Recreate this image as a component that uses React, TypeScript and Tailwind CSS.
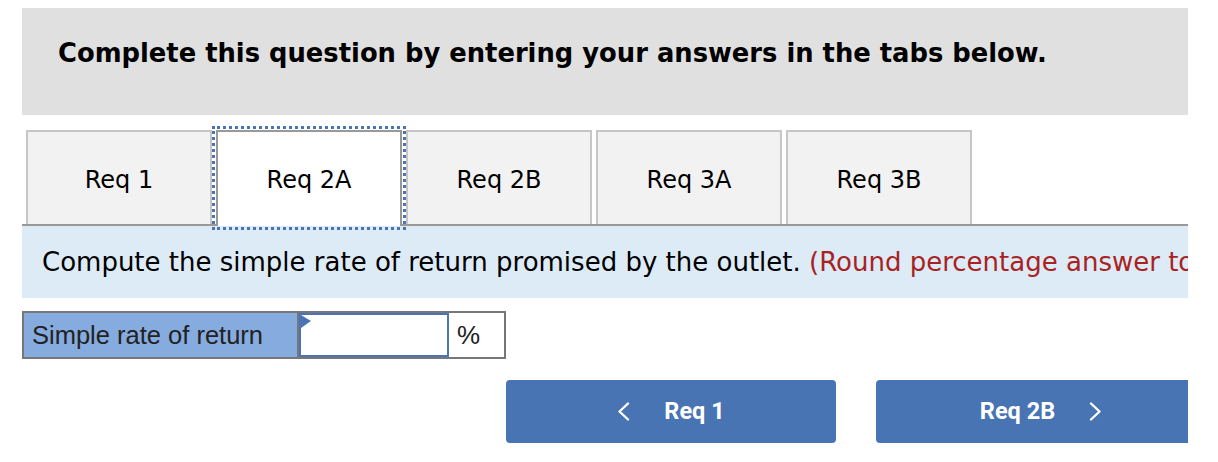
import { useState } from 'react'

const tabs = ['Req 1', 'Req 2A', 'Req 2B', 'Req 3A', 'Req 3B']

function Chevron({ dir }: { dir: 'left' | 'right' }) {
  return (
    <svg width="13" height="19" viewBox="0 0 13 19" fill="none">
      {dir === 'left' ? (
        <polyline points="11,1.5 2.5,9.5 11,17.5" stroke="white" strokeWidth="2.4" strokeLinecap="round" strokeLinejoin="round" />
      ) : (
        <polyline points="2,1.5 10.5,9.5 2,17.5" stroke="white" strokeWidth="2.4" strokeLinecap="round" strokeLinejoin="round" />
      )}
    </svg>
  )
}

export default function App() {
  const [active, setActive] = useState(1)
  const [value, setValue] = useState('')

  return (
    <div className="w-[1218px] h-[462px] bg-white pt-[8px] pl-[22px]">
      <div className="w-[1166px] overflow-hidden">
        {/* instructions header */}
        <div className="h-[107px] bg-[#e0e0e0] pl-[36px] pt-[29px]">
          <p className="font-['DejaVu_Sans',sans-serif] font-bold text-[25.8px] leading-[32px] text-black whitespace-nowrap">
            Complete this question by entering your answers in the tabs below.
          </p>
        </div>

        {/* tabs */}
        <div className="mt-[15px] flex items-end gap-[4px] pl-[4px] border-b-2 border-[#999]">
          {tabs.map((t, i) =>
            i === active ? (
              <button
                key={t}
                onClick={() => setActive(i)}
                className="w-[186px] h-[96px] -mb-[2px] bg-white border-2 border-b-0 border-[#999] outline-[3px] outline-dotted outline-[#4a74b5] outline-offset-[1px] font-['DejaVu_Sans',sans-serif] text-[24px] text-black pt-[2px]"
              >
                {t}
              </button>
            ) : (
              <button
                key={t}
                onClick={() => setActive(i)}
                className="w-[186px] h-[94px] bg-[#f2f2f2] border-2 border-b-0 border-[#c6c6c6] font-['DejaVu_Sans',sans-serif] text-[24px] text-black pt-[4px]"
              >
                {t}
              </button>
            )
          )}
        </div>

        {/* question */}
        <div className="h-[72px] bg-[#ddebf7] pl-[20px] flex items-center">
          <p className="font-['DejaVu_Sans',sans-serif] text-[26px] text-black whitespace-nowrap">
            Compute the simple rate of return promised by the outlet.{' '}
            <span className="text-[#a8231f]">(Round percentage answer to 1 decimal place.)</span>
          </p>
        </div>

        {/* answer row */}
        <div className="mt-[13px] flex w-[484px] h-[48px] border-2 border-[#777]">
          <div className="w-[275px] bg-[#85abdf] border-r-2 border-[#777] flex items-center pl-[8px] font-['Liberation_Sans',Arial,sans-serif] text-[25.5px] text-[#222]">
            Simple rate of return
          </div>
          <div className="relative w-[150px] border-2 border-[#4a74b5] bg-white">
            <input
              value={value}
              onChange={e => setValue(e.target.value)}
              className="w-full h-full outline-none px-2 font-['Liberation_Sans',Arial,sans-serif] text-[22px] text-right"
            />
            <svg className="absolute left-0 top-0" width="11" height="14" viewBox="0 0 11 14">
              <polygon points="0,0 10,6 0,13" fill="#4a74b5" />
            </svg>
          </div>
          <div className="flex-1 bg-white flex items-center pl-[8px] font-['Liberation_Sans',Arial,sans-serif] text-[26px] text-[#222]">
            %
          </div>
        </div>

        {/* navigation */}
        <div className="mt-[21px] ml-[484px] flex gap-[40px] w-[700px]">
          <button className="w-[330px] h-[63px] shrink-0 rounded-[4px] bg-[#4874b3] flex items-center justify-center gap-[34px] font-['Roboto',sans-serif] font-bold text-[23.5px] text-white">
            <Chevron dir="left" />
            <span>Req 1</span>
          </button>
          <button className="w-[330px] h-[63px] shrink-0 rounded-[4px] bg-[#4874b3] flex items-center justify-center gap-[34px] font-['Roboto',sans-serif] font-bold text-[23.5px] text-white">
            <span>Req 2B</span>
            <Chevron dir="right" />
          </button>
        </div>
      </div>
    </div>
  )
}
